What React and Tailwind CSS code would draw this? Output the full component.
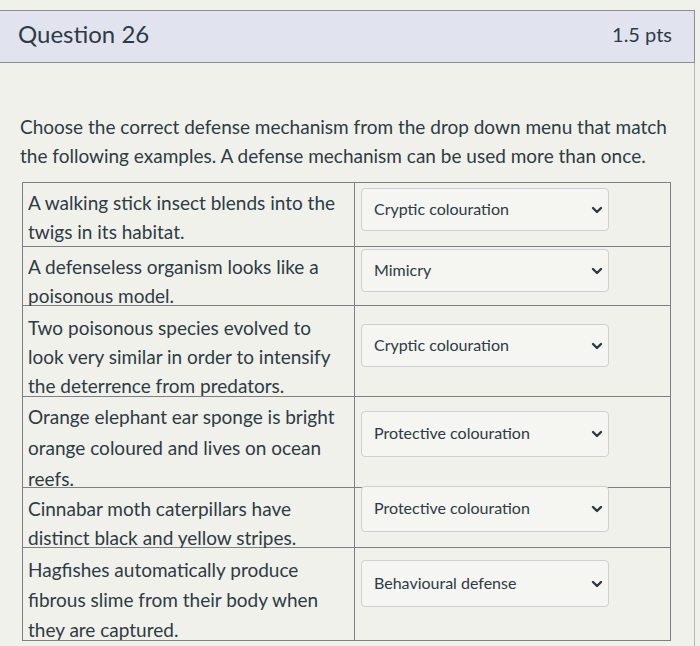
import React from "react";

const rows = [
  { lines: ["A walking stick insect blends into the", "twigs in its habitat."], val: "Cryptic colouration", h: "h-[64px]", pt: "pt-[5px]", lh: "leading-[29px]", dt: "mt-[5px] h-[43px]" },
  { lines: ["A defenseless organism looks like a", "poisonous model."], val: "Mimicry", h: "h-[59px]", pt: "pt-[5px]", lh: "leading-[29px]", dt: "mt-[2px] h-[43px]" },
  { lines: ["Two poisonous species evolved to", "look very similar in order to intensify", "the deterrence from predators."], val: "Cryptic colouration", h: "h-[91px]", pt: "pt-[7px]", lh: "leading-[29px]", dt: "mt-[18px] h-[43px]" },
  { lines: ["Orange elephant ear sponge is bright", "orange coloured and lives on ocean", "reefs."], val: "Protective colouration", h: "h-[91px]", pt: "pt-[4px]", lh: "leading-[31px]", dt: "mt-[14px] h-[46px]" },
  { lines: ["Cinnabar moth caterpillars have", "distinct black and yellow stripes."], val: "Protective colouration", h: "h-[60px]", pt: "pt-[6px]", lh: "leading-[29px]", dt: "-mt-[2px] h-[46px]" },
  { lines: ["Hagfishes automatically produce", "fibrous slime from their body when", "they are captured."], val: "Behavioural defense", h: "h-[93px]", pt: "pt-[7px]", lh: "leading-[30px]", dt: "mt-[12px] h-[47px]" },
];

function Chevron() {
  return (
    <svg width="12" height="8" viewBox="0 0 12 8" className="shrink-0">
      <path d="M2 2 L6 6 L10 2" fill="none" stroke="#2d3b45" strokeWidth="2.4" strokeLinecap="round" strokeLinejoin="round" />
    </svg>
  );
}

export default function App() {
  return (
    <div
      className="w-[700px] h-[646px] overflow-hidden bg-[#f1f1eb] text-[#2d3b45]"
      style={{ fontFamily: "Lato, 'Open Sans', sans-serif" }}
    >
      <div className="pt-[10px]">
        <div className="w-[695px] h-[53px] bg-[#e1e4ee] border-y border-r border-[#8c9096] flex items-center justify-between pl-[18px] pr-[22px] pb-[6px]">
          <span className="text-[24px] leading-none">Question 26</span>
          <span className="text-[20px] leading-none">1.5 pts</span>
        </div>
        <div className="w-[695px] border-r border-[#b5b8ba] h-[600px] pl-[20px]">
          <p className="pt-[49px] text-[19px] leading-[29px] whitespace-nowrap">
            Choose the correct defense mechanism from the drop down menu that match
            <br />
            the following examples. A defense mechanism can be used more than once.
          </p>
          <div className="mt-[12px] ml-[2px] w-[649px] border border-[#7d8185] border-b-0">
            {rows.map((r, i) => (
              <div key={i} className={`flex border-b border-[#7d8185] ${r.h}`}>
                <div className={`w-[332px] shrink-0 border-r border-[#7d8185] pl-[5px] text-[19px] whitespace-nowrap ${r.pt} ${r.lh}`}>
                  {r.lines.map((l, j) => (
                    <div key={j}>{l}</div>
                  ))}
                </div>
                <div className="flex-1 pl-[6px]">
                  <div className={`w-[248px] rounded-[4px] border border-[#cdd1d4] bg-[#f5f5f1] flex items-center justify-between pl-[12px] pr-[5px] text-[16px] ${r.dt}`}>
                    <span className="-mt-[2px]">{r.val}</span>
                    <Chevron />
                  </div>
                </div>
              </div>
            ))}
          </div>
        </div>
      </div>
    </div>
  );
}
